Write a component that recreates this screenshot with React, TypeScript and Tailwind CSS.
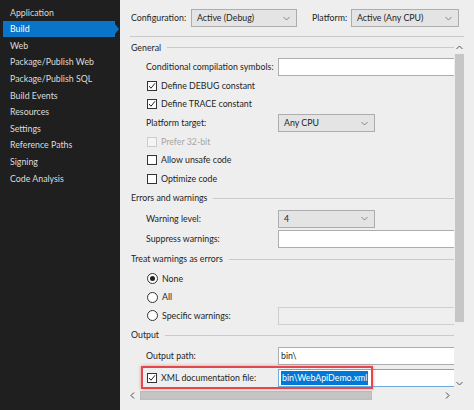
import type { ReactNode } from "react";

const navItems = [
  "Application",
  "Build",
  "Web",
  "Package/Publish Web",
  "Package/Publish SQL",
  "Build Events",
  "Resources",
  "Settings",
  "Reference Paths",
  "Signing",
  "Code Analysis",
];

function Chevron() {
  return (
    <svg width="7" height="5" viewBox="0 0 7 5" className="shrink-0">
      <polyline points="0.5,1 3.5,4 6.5,1" fill="none" stroke="#7a7a7a" strokeWidth="0.9" />
    </svg>
  );
}

function Dropdown({ value, className }: { value: string; className: string }) {
  return (
    <div className={`flex h-[18px] shrink-0 items-center justify-between border border-[#adadad] bg-[#e4e4e4] pl-[5px] pr-[6px] ${className}`}>
      <span>{value}</span>
      <Chevron />
    </div>
  );
}

function TextBox({ value, disabled, focused }: { value?: ReactNode; disabled?: boolean; focused?: boolean }) {
  return (
    <div
      className={`flex h-[18px] w-[190px] shrink-0 items-center border pl-[2px] ${
        focused ? "border-[#6fa8dc]" : disabled ? "border-[#cfcfcf]" : "border-[#abadb3]"
      } ${disabled ? "bg-[#efefef]" : "bg-white"}`}
    >
      {value}
    </div>
  );
}

function CheckBox({ checked, disabled }: { checked?: boolean; disabled?: boolean }) {
  return (
    <span
      className={`flex h-[10px] w-[10px] shrink-0 items-center justify-center border ${
        disabled ? "border-[#cccccc] bg-[#f4f4f4]" : "border-[#333333] bg-white"
      }`}
    >
      {checked && (
        <svg width="8" height="8" viewBox="0 0 8 8">
          <polyline points="1,4 3,6.2 7,1.3" fill="none" stroke="#222" strokeWidth="1" />
        </svg>
      )}
    </span>
  );
}

function Radio({ checked }: { checked?: boolean }) {
  return (
    <span className="flex h-[11px] w-[11px] shrink-0 items-center justify-center rounded-full border border-[#333333] bg-white">
      {checked && <span className="h-[5px] w-[5px] rounded-full bg-[#222222]" />}
    </span>
  );
}

function Section({ title, h }: { title: string; h: string }) {
  return (
    <div className={`flex items-center pl-[11px] ${h}`}>
      <span>{title}</span>
      <span className="ml-[6px] h-px flex-1 bg-[#cacaca]" />
    </div>
  );
}

function Row({ h, children }: { h: string; children: ReactNode }) {
  return <div className={`flex items-center pl-[26px] ${h}`}>{children}</div>;
}

function Label({ children }: { children: ReactNode }) {
  return <span className="w-[132px] shrink-0">{children}</span>;
}

function CheckRow({ h, label, checked, disabled }: { h: string; label: string; checked?: boolean; disabled?: boolean }) {
  return (
    <Row h={h}>
      <span className="ml-px flex items-center gap-[4px]">
        <CheckBox checked={checked} disabled={disabled} />
        <span className={disabled ? "text-[#a6a6a6]" : ""}>{label}</span>
      </span>
    </Row>
  );
}

function RadioRow({ h, label, checked, children }: { h: string; label: string; checked?: boolean; children?: ReactNode }) {
  return (
    <Row h={h}>
      <span className="ml-px flex w-[131px] shrink-0 items-center gap-[4px]">
        <Radio checked={checked} />
        <span>{label}</span>
      </span>
      {children}
    </Row>
  );
}

export default function App() {
  return (
    <div className="relative flex h-[410px] w-[474px] overflow-hidden whitespace-nowrap font-['Lato',sans-serif] text-[8.8px] text-[#1e1e1e]">
      {/* Left navigation */}
      <aside className="w-[120px] shrink-0 bg-[#1f1f1f] pt-[4px] text-[#dcdcdc]">
        {navItems.map((item) =>
          item === "Build" ? (
            <div key={item} className="relative ml-[3px] mr-[5px] flex h-[16.6px] items-center bg-[#0a74c9] pl-[7px] text-white">
              {item}
              <span className="absolute right-[-4px] top-1/2 h-0 w-0 -translate-y-1/2 border-y-[5px] border-l-[4px] border-y-transparent border-l-[#0a74c9]" />
            </div>
          ) : (
            <div key={item} className="flex h-[16.6px] items-center pl-[10px]">
              {item}
            </div>
          )
        )}
      </aside>

      {/* Property page */}
      <main className="flex h-[410px] flex-1 flex-col bg-[#eeeeee]">
        <div className="flex h-[36px] shrink-0 items-center pl-[11px]">
          <span className="w-[60px] shrink-0">Configuration:</span>
          <Dropdown value="Active (Debug)" className="w-[106px]" />
          <span className="ml-[15px] w-[39px] shrink-0">Platform:</span>
          <Dropdown value="Active (Any CPU)" className="w-[108px]" />
        </div>
        <div className="ml-[10px] mr-[10px] h-px shrink-0 bg-[#c9c9c9]" />

        {/* Scroll viewport: content, vertical bar, horizontal bar */}
        <div className="grid grid-cols-[334px_10px] grid-rows-[353px_13px]">
          <div className="overflow-hidden pt-px">
            <Section title="General" h="h-[19px]" />
            <Row h="h-[20px]">
              <Label>Conditional compilation symbols:</Label>
              <TextBox />
            </Row>
            <CheckRow h="h-[18px]" label="Define DEBUG constant" checked />
            <CheckRow h="h-[18px]" label="Define TRACE constant" checked />
            <Row h="h-[20px]">
              <Label>Platform target:</Label>
              <Dropdown value="Any CPU" className="w-[97px]" />
            </Row>
            <CheckRow h="h-[18px]" label="Prefer 32-bit" disabled />
            <CheckRow h="h-[18px]" label="Allow unsafe code" />
            <CheckRow h="h-[19px]" label="Optimize code" />
            <Section title="Errors and warnings" h="h-[20px]" />
            <Row h="h-[21px]">
              <Label>Warning level:</Label>
              <Dropdown value="4" className="w-[97px]" />
            </Row>
            <Row h="h-[20px]">
              <Label>Suppress warnings:</Label>
              <TextBox />
            </Row>
            <Section title="Treat warnings as errors" h="h-[20px]" />
            <RadioRow h="h-[19px]" label="None" checked />
            <RadioRow h="h-[18px]" label="All" />
            <RadioRow h="h-[19px]" label="Specific warnings:">
              <TextBox disabled />
            </RadioRow>
            <Section title="Output" h="h-[20px]" />
            <Row h="h-[22px]">
              <Label>Output path:</Label>
              <TextBox value="bin\" />
            </Row>
            <Row h="h-[22px]">
              <span className="ml-px flex w-[131px] shrink-0 items-center gap-[4px]">
                <CheckBox checked />
                <span>XML documentation file:</span>
              </span>
              <TextBox
                focused
                value={<span className="bg-[#0078d7] px-px text-white">bin\WebApiDemo.xml</span>}
              />
            </Row>
          </div>

          {/* Vertical scrollbar */}
          <div className="flex flex-col items-center">
            <svg width="7" height="5" viewBox="0 0 7 5" className="mt-[8px] shrink-0">
              <polyline points="0.5,4 3.5,1 6.5,4" fill="none" stroke="#555" strokeWidth="1" />
            </svg>
            <div className="mt-[4px] h-[268px] w-[9px] shrink-0 bg-[#c6c6c6]" />
            <div className="flex-1" />
            <svg width="7" height="5" viewBox="0 0 7 5" className="mb-[4px] shrink-0">
              <polyline points="0.5,1 3.5,4 6.5,1" fill="none" stroke="#555" strokeWidth="1" />
            </svg>
          </div>

          {/* Horizontal scrollbar */}
          <div className="flex h-[13px] items-start pt-px">
            <svg width="5" height="7" viewBox="0 0 5 7" className="ml-[10px] mt-[1px] shrink-0">
              <polyline points="4,0.5 1,3.5 4,6.5" fill="none" stroke="#444" strokeWidth="1" />
            </svg>
            <div className="ml-[5px] h-[9px] w-[232px] shrink-0 border border-[#bdbdbd] bg-[#c4c4c4]" />
            <div className="flex-1" />
            <svg width="5" height="7" viewBox="0 0 5 7" className="mr-[4px] mt-[1px] shrink-0">
              <polyline points="1,0.5 4,3.5 1,6.5" fill="none" stroke="#444" strokeWidth="1" />
            </svg>
          </div>
          <div />
        </div>
      </main>

      {/* Highlight annotation */}
      <div className="pointer-events-none absolute left-[141px] top-[366px] h-[23px] w-[232px] border-2 border-[#e04a4f] shadow-[0_0_3px_rgba(224,74,79,0.6)]" />
    </div>
  );
}
